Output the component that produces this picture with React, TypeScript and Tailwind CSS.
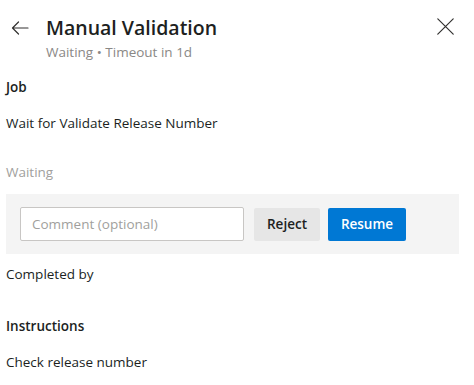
import React from 'react';

const font = { fontFamily: '"Open Sans", Lato, sans-serif' };

const BackArrow = () => (
  <svg width="18" height="14" viewBox="0 0 18 14" fill="none">
    <path d="M17 7H1.5M7.5 1L1.5 7L7.5 13" stroke="#323130" strokeWidth="1.2" strokeLinecap="round" strokeLinejoin="round" />
  </svg>
);

const CloseIcon = () => (
  <svg width="17" height="17" viewBox="0 0 17 17" fill="none">
    <path d="M0.8 0.8L16.2 16.2M16.2 0.8L0.8 16.2" stroke="#323130" strokeWidth="1.2" strokeLinecap="round" />
  </svg>
);

export default function App() {
  return (
    <div className="w-[474px] h-[385px] bg-white overflow-hidden pt-[14px] pl-[6px] pr-[15px] text-[#201f1e]" style={font}>
      <header className="flex items-start">
        <div className="h-[28px] ml-[5px] flex items-center">
          <BackArrow />
        </div>
        <div className="ml-[17px] flex-1">
          <h1 className="text-[19.5px] leading-[28px] font-semibold text-[#201f1e]">Manual Validation</h1>
          <p className="text-[13.5px] leading-[18px] mt-[1px] text-[#8a8886]">Waiting • Timeout in 1d</p>
        </div>
        <div className="mt-[4px] mr-[5px]">
          <CloseIcon />
        </div>
      </header>

      <div className="mt-[16px] text-[13.5px] leading-[20px] font-semibold">Job</div>
      <div className="mt-[16px] text-[13.5px] leading-[20px]">Wait for Validate Release Number</div>
      <div className="mt-[29px] text-[13.5px] leading-[20px] text-[#a19f9d]">Waiting</div>

      <div className="mt-[12px] bg-[#f4f4f4] px-[14px] py-[13px] flex items-center gap-[10px]">
        <div className="w-[224px] h-[34px] bg-white border border-[#c8c6c4] rounded-[2px] flex items-center px-[11px] text-[13.5px] text-[#a19f9d]">
          Comment (optional)
        </div>
        <div className="flex gap-[8px]">
          <button className="w-[66px] h-[33px] bg-[#e6e6e6] rounded-[2px] text-[13.5px] font-semibold text-[#201f1e]" style={font}>
            Reject
          </button>
          <button className="w-[78px] h-[33px] bg-[#0078d4] rounded-[2px] text-[13.5px] font-semibold text-white" style={font}>
            Resume
          </button>
        </div>
      </div>

      <div className="mt-[10px] text-[13.5px] leading-[20px]">Completed by</div>
      <div className="mt-[32px] text-[13.5px] leading-[20px] font-semibold">Instructions</div>
      <div className="mt-[16px] text-[13.5px] leading-[20px]">Check release number</div>
    </div>
  );
}
